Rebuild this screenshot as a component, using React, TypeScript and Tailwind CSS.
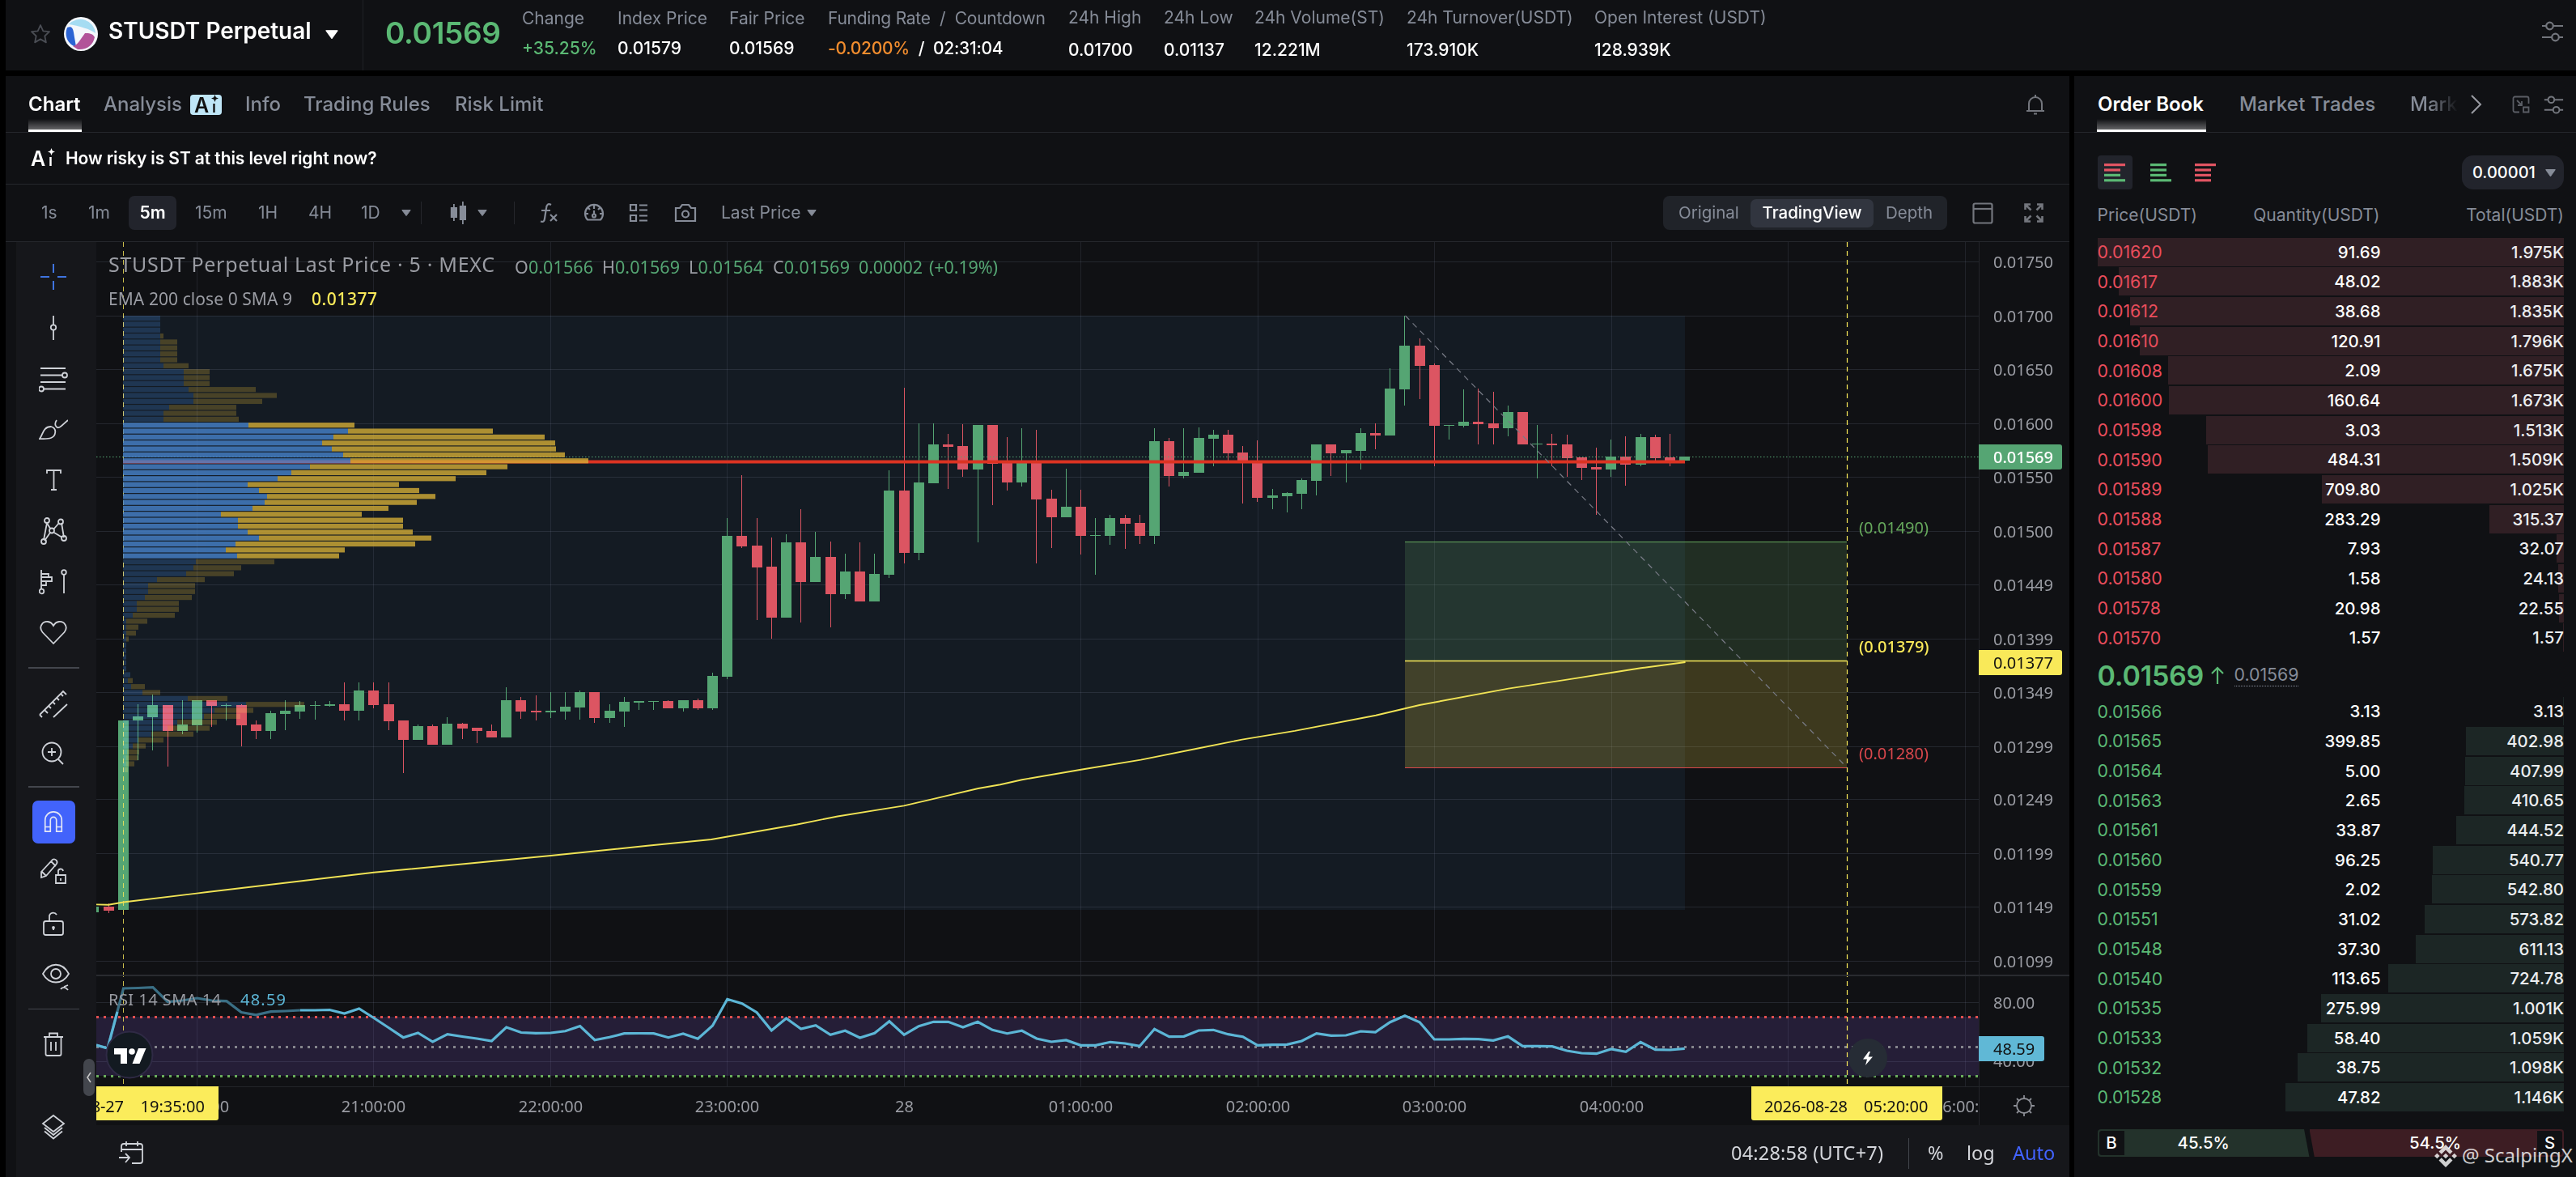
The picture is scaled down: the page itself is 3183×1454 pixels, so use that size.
import { ReactNode } from "react";

// [high, bodyTop, bodyBottom, low, up] in plot pixels, one entry per 5m candle
const candles: [number, number, number, number, number][] = [
  [890, 890, 1124, 1124, 1], [870, 885, 890, 939, 1], [858, 871, 886, 927, 1], [871, 871, 903, 947, 0], [865, 895, 903, 907, 1],
  [865, 865, 896, 905, 1], [865, 865, 872, 898, 0], [869, 871, 872, 890, 1], [870, 871, 896, 922, 0], [890, 895, 903, 913, 0],
  [878, 881, 903, 913, 1], [865, 878, 882, 902, 1], [866, 871, 879, 888, 1], [866, 871, 872, 889, 1], [866, 870, 872, 873, 1],
  [843, 870, 878, 890, 0], [843, 853, 878, 890, 1], [843, 853, 871, 875, 0], [843, 870, 891, 902, 0], [890, 890, 914, 955, 0],
  [895, 897, 914, 914, 1], [895, 897, 920, 920, 0], [886, 894, 920, 920, 1], [893, 894, 900, 913, 0], [899, 899, 903, 918, 0],
  [895, 903, 911, 911, 0], [849, 865, 911, 911, 1], [861, 865, 879, 888, 0], [859, 878, 880, 890, 0], [855, 878, 880, 887, 1],
  [855, 873, 879, 889, 1], [853, 855, 874, 889, 1], [855, 855, 887, 893, 0], [870, 878, 887, 893, 1], [861, 867, 879, 898, 1],
  [866, 866, 868, 877, 1], [866, 866, 867, 877, 1], [865, 866, 875, 875, 0], [865, 865, 875, 879, 1], [863, 865, 875, 877, 0],
  [831, 835, 875, 877, 1], [640, 662, 836, 839, 1], [587, 662, 675, 677, 0], [640, 674, 701, 766, 0], [664, 700, 763, 789, 0],
  [660, 670, 763, 763, 1], [629, 670, 719, 769, 0], [657, 688, 719, 719, 1], [669, 688, 734, 775, 0], [684, 706, 734, 740, 1],
  [670, 706, 743, 743, 0], [684, 709, 743, 743, 1], [581, 606, 710, 714, 1], [479, 606, 683, 696, 0], [523, 596, 683, 692, 1],
  [523, 549, 597, 597, 1], [536, 549, 552, 604, 0], [524, 551, 580, 589, 0], [525, 525, 580, 670, 1], [525, 525, 573, 624, 0],
  [540, 569, 596, 606, 0], [529, 569, 596, 601, 1], [531, 571, 617, 696, 0], [605, 616, 639, 677, 0], [579, 626, 639, 639, 1],
  [605, 626, 662, 685, 0], [640, 661, 662, 710, 1], [636, 640, 662, 673, 1], [636, 640, 647, 678, 0], [636, 646, 662, 672, 0],
  [529, 545, 662, 672, 1], [541, 545, 588, 601, 0], [529, 583, 588, 591, 1], [528, 541, 584, 584, 1], [531, 537, 542, 576, 1],
  [531, 537, 560, 569, 0], [551, 559, 571, 622, 0], [544, 570, 615, 620, 0], [604, 612, 615, 629, 1], [608, 609, 613, 633, 1],
  [591, 593, 610, 629, 1], [549, 549, 594, 612, 1], [549, 549, 560, 588, 0], [556, 556, 560, 596, 1], [529, 535, 557, 580, 1],
  [523, 535, 538, 555, 0], [455, 480, 538, 538, 1], [390, 427, 481, 501, 1], [418, 427, 452, 493, 0], [449, 451, 526, 576, 0],
  [525, 525, 526, 543, 1], [481, 521, 526, 528, 1], [480, 521, 524, 549, 0], [484, 523, 529, 549, 0], [501, 509, 529, 539, 1],
  [509, 509, 549, 549, 0], [525, 548, 549, 591, 1], [536, 548, 550, 576, 0], [537, 549, 566, 589, 0], [565, 565, 578, 593, 0],
  [553, 577, 580, 636, 0], [543, 564, 580, 589, 1], [539, 564, 574, 600, 0], [536, 540, 574, 576, 1], [537, 540, 566, 570, 0],
  [536, 565, 570, 576, 0], [564, 564, 569, 571, 1],
];

const rsi = [
  1221, 1220.5, 1219.6, 1237.5, 1236, 1233, 1236, 1236.7, 1250.5, 1253.8, 1249.6, 1249, 1248, 1248, 1247.5, 1252, 1246, 1257.5, 1269.5,
  1281.7, 1276, 1287, 1277.6, 1280.5, 1283, 1286, 1269, 1275.5, 1276.3, 1276, 1273.8, 1267.6, 1284.7, 1281.3, 1276.7, 1276.5, 1276.7,
  1281.7, 1277, 1283.3, 1267, 1234.3, 1239.7, 1250.7, 1273, 1258, 1271, 1266.7, 1278.3, 1273.3, 1282, 1276.3, 1261.7, 1278.3, 1267.7,
  1262.3, 1262.3, 1269, 1262.3, 1272.3, 1276.7, 1273.3, 1283, 1287, 1285, 1291.3, 1291.3, 1287.3, 1289, 1292.3, 1271.3, 1280.7, 1280.3,
  1273, 1272.3, 1277.7, 1280.7, 1291.3, 1290.7, 1290.3, 1286, 1276.7, 1279.3, 1279, 1274, 1275, 1262.7, 1254.7, 1262.7, 1284, 1284,
  1283.3, 1283.7, 1285.3, 1280.3, 1292.3, 1292.3, 1292.7, 1298, 1301, 1301.7, 1296, 1299.3, 1287.3, 1296.7, 1297, 1295.3,
];

// [up volume, total volume] widths per profile row
const profile: [number, number][] = [
  [46, 46], [46, 46], [46, 46], [46, 50], [46, 67], [46, 67], [46, 67], [46, 67], [50, 81], [75, 107], [75, 107], [75, 107], [81, 164],
  [87, 190], [87, 172], [57, 140], [50, 140], [50, 143], [155, 286], [278, 457], [260, 521], [246, 534], [258, 535], [272, 546],
  [281, 575], [231, 475], [208, 449], [191, 411], [154, 341], [168, 366], [178, 386], [175, 363], [160, 328], [121, 295], [142, 346],
  [142, 346], [154, 358], [168, 381], [139, 361], [127, 274], [141, 267], [90, 187], [87, 146], [78, 137], [42, 101], [31, 89],
  [31, 89], [27, 85], [17, 69], [17, 69], [12, 64], [4, 30], [4, 19], [4, 16], [4, 7], [4, 4], [4, 4], [4, 4], [4, 4], [4, 4], [9, 9],
  [6, 12], [10, 27], [24, 46], [80, 129], [152, 224], [113, 161], [100, 145], [67, 116], [55, 107], [35, 87], [19, 50], [12, 28],
  [5, 20], [4, 19], [4, 14], [2, 6],
];

const ema =
  "119,1117.4 134,1117.8 152.5,1114.5 243,1103.6 462,1077.8 680.6,1057 800,1044.8 879,1037 985,1018.5 1035,1008.5 1090,999.6 1117,995.4 1153.6,986.8 1208.7,974 1236,969.3 1262.7,963.2 1335.7,950.7 1409.7,938.6 1481.6,924.3 1534.7,913.6 1600,902.9 1700,883.7 1754,871 1863.8,850.6 1936,839.6 1991,831 2027.5,825.3 2082.5,818";

const priceTicks: [string, number][] = [
  ["0.01750", 323.5], ["0.01700", 390.5], ["0.01650", 456.5], ["0.01600", 523.5], ["0.01550", 589.5], ["0.01500", 656.5],
  ["0.01449", 722.5], ["0.01399", 789.5], ["0.01349", 855.5], ["0.01299", 922.5], ["0.01249", 987.5], ["0.01199", 1054.5],
  ["0.01149", 1120.5], ["0.01099", 1187.5],
];

const timeTicks: [string, number][] = [
  ["20:00:00", 243.5], ["21:00:00", 461.5], ["22:00:00", 680.5], ["23:00:00", 898.5], ["28", 1117.5], ["01:00:00", 1335.5],
  ["02:00:00", 1554.5], ["03:00:00", 1772.5], ["04:00:00", 1991.5], ["", 2209.5], ["06:00:00", 2428.5],
];

const asks: [string, string, string, number][] = [
  ["0.01620", "91.69", "1.975K", 1975], ["0.01617", "48.02", "1.883K", 1883], ["0.01612", "38.68", "1.835K", 1835],
  ["0.01610", "120.91", "1.796K", 1796], ["0.01608", "2.09", "1.675K", 1675], ["0.01600", "160.64", "1.673K", 1673],
  ["0.01598", "3.03", "1.513K", 1513], ["0.01590", "484.31", "1.509K", 1509], ["0.01589", "709.80", "1.025K", 1025],
  ["0.01588", "283.29", "315.37", 315], ["0.01587", "7.93", "32.07", 32], ["0.01580", "1.58", "24.13", 24],
  ["0.01578", "20.98", "22.55", 22], ["0.01570", "1.57", "1.57", 2],
];

const bids: [string, string, string, number][] = [
  ["0.01566", "3.13", "3.13", 3], ["0.01565", "399.85", "402.98", 403], ["0.01564", "5.00", "407.99", 408],
  ["0.01563", "2.65", "410.65", 411], ["0.01561", "33.87", "444.52", 444], ["0.01560", "96.25", "540.77", 541],
  ["0.01559", "2.02", "542.80", 543], ["0.01551", "31.02", "573.82", 574], ["0.01548", "37.30", "611.13", 611],
  ["0.01540", "113.65", "724.78", 725], ["0.01535", "275.99", "1.001K", 1001], ["0.01533", "58.40", "1.059K", 1059],
  ["0.01532", "38.75", "1.098K", 1098], ["0.01528", "47.82", "1.146K", 1146],
];

const cx = (i: number) => 152.5 + i * 18.2;

export default function App() {
  return (
    <div className="flex h-[1454px] w-[3183px] flex-col overflow-hidden bg-black pl-[7px] font-['Inter',sans-serif] text-[20px] text-white">
      <Header />
      <div className="mt-[7px] flex h-[1360px]">
        <div className="flex w-[2550px] flex-col bg-[#101114]">
          <ChartTabs />
          <Question />
          <Toolbar />
          <div className="flex flex-1">
            <DrawingTools />
            <div className="flex w-[2438px] flex-col">
              <div className="relative h-[1091px]">
                <Chart />
              </div>
              <BottomBar />
            </div>
          </div>
        </div>
        <OrderBook />
      </div>
    </div>
  );
}

function Header() {
  return (
    <header className="flex h-[87px] shrink-0 bg-[#101114] pr-[15px]">
      <div className="flex w-[442px] items-center border-r border-[#1f2126] pl-[29px]">
        <svg width="28" height="28" viewBox="0 0 28 28" fill="none" stroke="#4a4d54" strokeWidth="1.8" strokeLinejoin="round" className="mt-[-3px]">
          <path d="M14 3l3.3 7.3 7.7.9-5.7 5.3 1.6 7.9L14 20.4l-6.900 4 1.600-7.900L3 11.200l7.700-.9z" />
        </svg>
        <svg width="42" height="42" viewBox="0 0 42 42" className="ml-[15px] mt-[-3px]">
          <circle cx="21" cy="21" r="21" fill="#f4f7fb" />
          <path d="M6 9A19 19 0 0 1 39 20C33 15 18 11 6 9z" fill="#a5dcf2" />
          <path d="M4 13c5-2 7 0 8 6 1 7 2 11 3 18C5 34 0 23 4 13z" fill="#2b63d3" />
          <path d="M26 20c5 0 9 0 12 5-2 10-10 16-21 15l-6-4c5-1 8-6 15-16z" fill="#b25399" />
        </svg>
        <span className="ml-[13px] mt-[-12px] w-[268px] text-[28px] font-semibold whitespace-nowrap">STUSDT Perpetual</span>
        <Caret className="mt-[-3px] h-[11px] w-[16px] text-white" />
      </div>
      <span className="ml-[27px] mt-[14px] w-[169px] text-[37px] leading-[54px] font-semibold tracking-[-0.3px] text-[#5bb974]">0.01569</span>
      <Stat className="w-[118px]" label="Change"><span className="text-[#5bb974]">+35.25%</span></Stat>
      <Stat className="w-[138px]" label="Index Price">0.01579</Stat>
      <Stat className="w-[122px]" label="Fair Price">0.01569</Stat>
      <Stat className="w-[297px]" label="Funding Rate&nbsp; / &nbsp;Countdown" tight>
        <span className="text-[#f08c2e]">-0.0200%</span>&nbsp; /&nbsp; 02:31:04
      </Stat>
      <Stat className="w-[118px] -mt-px" label="24h High" low>0.01700</Stat>
      <Stat className="w-[112px] -mt-px" label="24h Low" low>0.01137</Stat>
      <Stat className="w-[188px] -mt-px" label="24h Volume(ST)" low>12.221M</Stat>
      <Stat className="w-[232px] -mt-px" label="24h Turnover(USDT)" low>173.910K</Stat>
      <Stat className="-mt-px" label="Open Interest (USDT)" low>128.939K</Stat>
      <Sliders className="mt-[25px] ml-auto h-[28px] w-[28px]" />
    </header>
  );
}

type StatProps = { label: string; children: ReactNode; className?: string; low?: boolean; tight?: boolean };

function Stat({ label, children, className = "", low, tight }: StatProps) {
  return (
    <div className={`shrink-0 pt-[9px] whitespace-nowrap ${tight ? "tracking-[-0.25px]" : ""} ${className}`}>
      <p className="text-[21px] leading-[28px] text-[#868c98]">{label}</p>
      <p className={low ? "mt-[12px] text-[21px] leading-[28px] font-medium" : "mt-[9px] text-[21px] leading-[28px] font-medium"}>{children}</p>
    </div>
  );
}

function Caret({ className = "" }: { className?: string }) {
  return (
    <svg viewBox="0 0 12 8" preserveAspectRatio="none" className={`shrink-0 ${className}`}>
      <path d="M.8.6h10.400L6 7.600z" fill="currentColor" stroke="currentColor" strokeLinejoin="round" />
    </svg>
  );
}

function Sliders({ className = "" }: { className?: string }) {
  return (
    <svg viewBox="0 0 28 28" fill="none" stroke="#73767d" strokeWidth="2.2" className={`shrink-0 ${className}`}>
      <path d="M1 7h5M15 7h12M1 21h12M22 21h5" />
      <circle cx="10.500" cy="7" r="4.300" />
      <circle cx="17.500" cy="21" r="4.300" />
    </svg>
  );
}

function AiMark({ color }: { color: string }) {
  return (
    <svg width="32" height="22" viewBox="0 0 32 22" fill={color} className="overflow-visible font-['Inter',sans-serif] font-semibold">
      <text x="0" y="20" fontSize="25">A</text>
      <text x="22" y="20" fontSize="19">ı</text>
      <path d="M25.500-2l1.300 3.200L30 2.500l-3.200 1.300L25.500 7l-1.300-3.200L21 2.500l3.200-1.300z" />
    </svg>
  );
}

function ChartTabs() {
  return (
    <nav className="flex h-[70px] shrink-0 items-center gap-[29px] border-b border-[#25272c] pt-px pl-[28px] text-[24px] font-medium text-[#868c98]">
      <span className="flex h-full w-[66px] items-center border-b-[3px] border-white bg-linear-to-t from-white/35 via-transparent via-20% pt-[3px] font-semibold text-white">Chart</span>
      <span className="-ml-[2px] flex w-[146px] items-center justify-between">
        Analysis
        <span className="flex h-[25px] w-[39px] items-center justify-center rounded-[4px] bg-[#bfe6f7] pt-[2px] pl-[2px]"><AiMark color="#111" /></span>
      </span>
      <span className="w-[45px]">Info</span>
      <span className="-ml-[2px] w-[158px] whitespace-nowrap">Trading Rules</span>
      <span className="whitespace-nowrap">Risk Limit</span>
      <svg viewBox="0 0 24 26" className="mr-[30px] ml-auto h-[26px] w-[24px]" fill="none" stroke="#73767d" strokeWidth="2">
        <path d="M1 21h22M4 21v-9a8 8 0 0 1 16 0v9M12 4V1M10 24.500h4" />
      </svg>
    </nav>
  );
}

function Question() {
  return (
    <div className="flex h-[64px] shrink-0 items-center gap-[11px] border-b border-[#25272c] pl-[31px] text-[21px] font-semibold tracking-[-0.1px]">
      <AiMark color="#fff" />
      How risky is ST at this level right now?
    </div>
  );
}

function Toolbar() {
  return (
    <div className="flex h-[71px] shrink-0 items-center border-b border-[#25272c] pl-[44px] text-[21px] text-[#868c98]">
      <span className="w-[58px]">1s</span>
      <span className="w-[50px]">1m</span>
      <span className="flex h-[42px] w-[59px] items-center justify-center rounded-[7px] bg-[#22242c] font-semibold text-white">5m</span>
      <span className="ml-[23px] w-[78px]">15m</span>
      <span className="w-[62px]">1H</span>
      <span className="w-[65px]">4H</span>
      <span className="w-[50px]">1D</span>
      <Caret className="mr-[12px] h-[8px] w-[12px]" />
      <span className="h-[28px] w-px bg-[#25272c]" />
      <svg viewBox="0 0 22 28" className="ml-[35px] h-[28px] w-[22px]" fill="currentColor">
        <path d="M4 3h1.800v4H9v13H5.800v4H4v-4H.8V7H4zM15 0h1.800v5H20v18h-3.200v5H15v-5h-3.200V5H15z" />
      </svg>
      <Caret className="mr-[33px] ml-[12px] h-[8px] w-[12px]" />
      <span className="h-[28px] w-px bg-[#25272c]" />
      <svg viewBox="0 0 24 26" className="ml-[31px] h-[26px] w-[24px]" fill="none" stroke="currentColor" strokeWidth="2.200">
        <path d="M14 3c-4-2-5.500 0-6 4L6 20c-.5 4-2 4.500-5 3.500M2 10h11M13 15l8 8M21 15l-8 8" />
      </svg>
      <svg viewBox="0 0 26 24" className="ml-[30px] h-[24px] w-[26px]" fill="none" stroke="currentColor" strokeWidth="2.200">
        <path d="M5 20.500a11 11 0 1 1 16 0zM13 3v4M3 13h3M20 13h3M6 6l2 2M20 6l-2 2M13 9v5" />
        <circle cx="13" cy="15.500" r="2" />
      </svg>
      <svg viewBox="0 0 24 24" className="ml-[30px] h-[24px] w-[24px]" fill="none" stroke="currentColor" strokeWidth="2.200">
        <path d="M2 2h7v7H2zM2 15h7v7H2zM13 2.500h10M13 8.500h10M13 15.500h10M13 21.500h10" />
      </svg>
      <svg viewBox="0 0 28 24" className="ml-[32px] h-[24px] w-[28px]" fill="none" stroke="currentColor" strokeWidth="2.200">
        <path d="M2 6h5l3-4h8l3 4h5v16H2z" />
        <circle cx="14" cy="13.500" r="4" />
      </svg>
      <span className="ml-[30px] w-[106px] text-[21px] whitespace-nowrap">Last Price</span>
      <Caret className="h-[8px] w-[12px]" />
      <div className="ml-auto flex h-[42px] w-[351px] items-center rounded-[8px] bg-[#202329] text-[20.500px]">
        <span className="w-[108px] pl-[19px]">Original</span>
        <span className="flex h-[35px] w-[152px] items-center justify-center rounded-[7px] bg-[#31353f] font-medium text-white">TradingView</span>
        <span className="pl-[15px]">Depth</span>
      </div>
      <svg viewBox="0 0 26 27" className="ml-[31px] h-[27px] w-[26px]" fill="none" stroke="#73767d" strokeWidth="2.200">
        <rect x="1.500" y="1.500" width="23" height="24" rx="2" />
        <path d="M2 8h22" />
      </svg>
      <svg viewBox="0 0 24 24" className="mr-[32px] ml-[38px] h-[24px] w-[24px]" fill="none" stroke="#73767d" strokeWidth="2.600">
        <path d="M1.500 8V1.500H8M1.500 1.500l7 7M16 1.500h6.500V8M22.500 1.500l-7 7M1.500 16v6.500H8M1.500 22.500l7-7M16 22.500h6.500V16M22.500 22.500l-7-7" />
      </svg>
    </div>
  );
}

function Tool({ className = "h-[62.7px]", children }: { className?: string; children: ReactNode }) {
  return (
    <div className={`flex w-full shrink-0 items-center justify-center ${className}`}>
      <svg width="36" height="36" viewBox="0 0 36 36" fill="none" stroke="#cfd2d8" strokeWidth="1.800">
        {children}
      </svg>
    </div>
  );
}

function DrawingTools() {
  return (
    <aside className="ml-[13px] flex w-[99px] shrink-0 flex-col items-center bg-[#16171b] pt-[12px] pr-[7px]">
      <Tool><path d="M2 18h11M23 18h11M18 2v11M18 23v11" stroke="#3f74e0" strokeWidth="2" /></Tool>
      <Tool><path d="M18 3v11M18 21v12" /><circle cx="18" cy="17.500" r="3.200" /></Tool>
      <Tool>
        <path d="M2 5h31M2 13.500h27M2 22h31M6 30.500h27" />
        <circle cx="32" cy="13.500" r="3" /><circle cx="3" cy="30.500" r="3" />
      </Tool>
      <Tool>
        <path d="M1 30c4-5 4-15 14-15 8 2 6 12 0 14-4 1.500-9 1-14 1zM22 7c-4 6 0 10 3 9 3-1 7-6 11-9" />
      </Tool>
      <Tool><path d="M10 10V6h17v4M18.500 6v24M15 30h7" /></Tool>
      <Tool>
        <path d="M10 8L6 29M9.500 7.500l5 8M18 16l7-8M14 20l-7 10M19 20l10 6M28 8l3 18" />
        <circle cx="10" cy="5" r="3" /><circle cx="27" cy="6.500" r="3" /><circle cx="16" cy="17.500" r="3" />
        <circle cx="6" cy="31" r="3" /><circle cx="31" cy="27" r="3" />
      </Tool>
      <Tool>
        <path d="M3 4v24M3 9h9v4H3M3 13h13v5H3M3 18h6v5H3M31 10v23" />
        <circle cx="3.500" cy="30.500" r="2.800" /><circle cx="31" cy="7" r="2.800" />
      </Tool>
      <Tool><path d="M18 32L4.500 18C-1 11 5 4.500 11 5c3.500.3 5.500 2.300 7 5 1.500-2.700 3.500-4.700 7-5 6-.5 12 6 6.500 13z" /></Tool>
      <span className="mt-[11px] h-[2px] w-[63px] shrink-0 bg-[#43464d]" />
      <Tool className="mt-[14px] h-[60px]">
        <path d="M1 31L30 2l4 4M1 31l3 3M7 25l4 4M12 20l3 3M17 15l3 3M22 10l3 3M27 5l3 3M18 34l17-16" />
      </Tool>
      <Tool className="h-[60px]"><circle cx="16" cy="17" r="11.500" /><path d="M24 26l6 6M16 12v10M11 17h10" /></Tool>
      <span className="mt-[11px] h-[2px] w-[63px] shrink-0 bg-[#43464d]" />
      <div className="mt-[16px] flex h-[53px] w-[53px] shrink-0 items-center justify-center rounded-[7px] bg-[#4263fb]">
        <svg width="28" height="28" viewBox="0 0 30 30" fill="none" stroke="#e4e7f5" strokeWidth="1.800">
          <path d="M4 28V13a11 11 0 0 1 22 0v15h-7V13a4 4 0 0 0-8 0v15zM4 22h7M19 22h7" />
        </svg>
      </div>
      <Tool className="mt-[2px] h-[65px]">
        <path d="M3 19L17 4c3-2 7 2 5 5L9 24l-6 2zM15 6l6 6M4 19l5 5M21 23h12v10H21zM24 23v-4a3 3 0 0 1 6-1M27 27v3" />
      </Tool>
      <Tool className="h-[65px]">
        <rect x="6" y="15" width="24" height="17" rx="2.500" />
        <path d="M13 15V8a5 5 0 0 1 9-1M18 22v4" /><circle cx="18" cy="23" r="1" />
      </Tool>
      <Tool className="h-[65px] pl-[6px]">
        <path d="M2 15c8-15 24-15 32 0-8 14-24 14-32 0z" /><circle cx="18" cy="15" r="6" />
        <path d="M24 34c2-3 6-3 9 1M28 31l5-2" />
      </Tool>
      <span className="mt-[7px] h-px w-[63px] shrink-0 bg-[#43464d]" />
      <Tool className="mt-[12px] h-[62px]">
        <path d="M6 9h24M8.500 9v21a2 2 0 0 0 2 2h15a2 2 0 0 0 2-2V9M13 9V4.500h10V9M15 15v11M21 15v11" />
      </Tool>
      <div className="relative w-full">
        <div className="absolute top-[-13px] right-[-5px] flex h-[46px] w-[14px] items-center justify-center rounded-full bg-[#43464d]">
          <svg width="8" height="14" viewBox="0 0 8 14" fill="none" stroke="#ccc" strokeWidth="1.500"><path d="M6 1L2 7l4 6" /></svg>
        </div>
      </div>
      <Tool className="mt-[40px] h-[62px]">
        <path d="M18 4l13 10-13 10L5 14zM7 19l11 9 11-9M7 23.500l11 9 11-9" />
      </Tool>
    </aside>
  );
}

function Chart() {
  return (
    <svg width="2438" height="1091" viewBox="119 299 2438 1091" className="block font-['Noto_Sans',sans-serif] text-[20px]" fill="none">
      <rect x="152" y="390" width="1930" height="734" fill="#141b23" />
      {priceTicks.map(([t, y]) => <path key={t} d={`M119 ${y}H2445`} stroke="#9aa6c4" strokeOpacity=".15" />)}
      <path d="M119 1238.500H2445M119 1311.500H2445" stroke="#9aa6c4" strokeOpacity=".15" />
      {timeTicks.map(([, x]) => <path key={x} d={`M${x} 299V1342`} stroke="#9aa6c4" strokeOpacity=".13" />)}
      <rect x="119" y="1256" width="2326" height="73" fill="#7e57c2" fillOpacity=".2" />

      <rect x="1736" y="669" width="546" height="147" fill="#78be6e" fillOpacity=".17" />
      <rect x="1736" y="816" width="546" height="133" fill="#f5dc46" fillOpacity=".2" />
      <path d="M1736 669.500H2282" stroke="#66a85c" strokeWidth="1.200" />
      <path d="M1736 948.500H2282" stroke="#d9474c" strokeWidth="1.200" />

      {/* bars that are scrolled half out of the pane */}
      <path d="M119 1120h3v7h-3z" fill="#55a573" />
      <path d="M134.500 1116V1128" stroke="#dc5562" />
      <rect x="128" y="1120" width="13" height="5" fill="#dc5562" />
      {candles.map(([h, t, b, l, up], i) => {
        const color = up ? "#55a573" : "#dc5562";
        return (
          <g key={i}>
            <path d={`M${Math.floor(cx(i)) + 0.5} ${h}V${l}`} stroke={color} />
            <rect x={Math.round(cx(i) - 6.5)} y={t} width="13" height={Math.max(b - t, 1)} fill={color} />
          </g>
        );
      })}

      <path d="M119 564.500H2445" stroke="#55a573" strokeDasharray="1.500 2.500" />
      <path d="M152 570.500H2082" stroke="#dc3322" strokeWidth="4" />
      <path d="M152.500 299V1342" stroke="#f9e959" strokeOpacity=".8" strokeDasharray="6 5" />
      {profile.map(([up, total], i) => {
        const value = i > 17 && i < 41;
        const y = 390 + i * 7.34;
        return value ? (
          <g key={i} opacity=".8">
            <rect x="152" y={y} width={up} height="6.200" fill="#4783cc" />
            <rect x={152 + up} y={y} width={total - up} height="6.200" fill="#d3ac36" />
          </g>
        ) : (
          <g key={i} className="mix-blend-screen">
            <rect x="152" y={y} width={up} height="6.200" fill="#0c1e36" />
            <rect x={152 + up} y={y} width={total - up} height="6.200" fill="#382c05" />
          </g>
        );
      })}
      <path d="M1736 816.500H2282" stroke="#f9e959" strokeWidth="1.500" />
      <polyline points={ema} stroke="#f0e355" strokeWidth="1.900" />
      <path d="M1736.500 390L2282 948" stroke="#787b86" strokeDasharray="7 6" strokeWidth="1.200" />

      <path d="M119 1256.500H2445" stroke="#e0504f" strokeWidth="3" strokeDasharray="3 6" />
      <path d="M119 1293.500H2445" stroke="#85858c" strokeWidth="3" strokeDasharray="3 6" />
      <path d="M119 1329.500H2445" stroke="#6aae5c" strokeWidth="3" strokeDasharray="3 6" />
      <polyline points={`119,1291 133,1295 ${rsi.slice(0, 13).map((y, i) => `${cx(i)},${y}`).join(" ")}`} stroke="#3a6f85" strokeWidth="3.200" />
      <polyline points="119,1291 133,1295 145,1250" stroke="#5cb6d6" strokeWidth="3.200" />
      <polyline points={rsi.slice(12).map((y, i) => `${cx(i + 12)},${y}`).join(" ")} stroke="#5cb6d6" strokeWidth="3.200" />

      <path d="M2282.500 299V1342" stroke="#f9e959" strokeWidth="1.200" strokeDasharray="6 5" />
      <path d="M119 1205H2557" stroke="#292b30" strokeWidth="2" />
      <path d="M119 1342.500H2557M2445.500 299V1390" stroke="#222429" />

      <g fill="#9a9ca3">
        <text x="134" y="336" fontSize="25" textLength="477">STUSDT Perpetual Last Price · 5 · MEXC</text>
        <g fill="#55a573" fontSize="21.500">
          <text x="636" y="338" textLength="97"><tspan fill="#9a9ca3">O</tspan>0.01566</text>
          <text x="744" y="338" textLength="96"><tspan fill="#9a9ca3">H</tspan>0.01569</text>
          <text x="851" y="338" textLength="92"><tspan fill="#9a9ca3">L</tspan>0.01564</text>
          <text x="955" y="338" textLength="95"><tspan fill="#9a9ca3">C</tspan>0.01569</text>
          <text x="1061" y="338" textLength="79">0.00002</text>
          <text x="1148" y="338" textLength="85">(+0.19%)</text>
        </g>
        <text x="134" y="377" fontSize="21" textLength="227">EMA 200 close 0 SMA 9</text>
        <text x="385" y="377" fontSize="21" fill="#f9e959" fontWeight="500" textLength="81">0.01377</text>
        <text x="134" y="1242" textLength="139">RSI 14 SMA 14</text>
        <text x="297" y="1242" fill="#5cb6d6" textLength="56">48.59</text>
        {priceTicks.map(([t, y]) => <text key={t} x="2463" y={y + 7}>{t}</text>)}
        <text x="2463" y="1246">80.00</text>
        <text x="2463" y="1318">40.00</text>
      </g>
      <svg x="119" y="1343" width="2326" height="47" viewBox="119 1343 2326 47">
        {timeTicks.map(([t, x]) => <text key={x} x={x} y="1373.500" textAnchor="middle" fill="#9a9ca3">{t}</text>)}
      </svg>
      <text x="2297" y="659" fill="#66a85c">(0.01490)</text>
      <text x="2297" y="806" fill="#f9e959" fontWeight="500">(0.01379)</text>
      <text x="2297" y="938" fill="#d9474c">(0.01280)</text>

      <path d="M2445 549h100a3 3 0 0 1 3 3v25a3 3 0 0 1-3 3h-100z" fill="#55a573" />
      <text x="2463" y="572" fill="#fff" fontWeight="500" textLength="74">0.01569</text>
      <path d="M2445 803h100a3 3 0 0 1 3 3v25a3 3 0 0 1-3 3h-100z" fill="#f9e959" />
      <text x="2463" y="826" fill="#111">0.01377</text>
      <path d="M2445 1280h78a3 3 0 0 1 3 3v25a3 3 0 0 1-3 3h-78z" fill="#60b8d6" />
      <text x="2463" y="1303" fill="#111">48.59</text>

      <path d="M119 1342h151v39a3 3 0 0 1-3 3H119z" fill="#fbec5b" />
      <text x="50" y="1373.500" fill="#111" textLength="103">2026-08-27</text>
      <text x="173.500" y="1373.500" fill="#111">19:35:00</text>
      <path d="M2164 1342h236v39a3 3 0 0 1-3 3h-230a3 3 0 0 1-3-3z" fill="#fbec5b" />
      <text x="2180" y="1373.500" fill="#111" textLength="103">2026-08-28</text>
      <text x="2303" y="1373.500" fill="#111">05:20:00</text>

      <circle cx="160" cy="1303" r="28.500" fill="#131a21" stroke="#2f2a45" strokeWidth="2" />
      <path d="M141 1295h16v19h-8v-11.500h-8zM171 1295h9.500l-8 19h-9z" fill="#fff" />
      <circle cx="163" cy="1299" r="3.800" fill="#fff" />
      <circle cx="2308" cy="1307" r="24" fill="#262c35" />
      <path d="M2309 1299l-7 9.500h5l-2 7.500 9-10.500h-5.500l2.500-6.500z" fill="#fff" />
      <g stroke="#8b8d94" strokeWidth="1.800">
        <circle cx="2501" cy="1366" r="9" />
        <path d="M2501 1353v4M2501 1375v4M2488 1366h4M2510 1366h4M2492 1357l2.500 2.500M2507.500 1372.500l2.500 2.500M2492 1375l2.500-2.500M2507.500 1359.500l2.500-2.500" />
      </g>
    </svg>
  );
}

function BottomBar() {
  return (
    <div className="flex h-[64px] items-center bg-[#16171b] pt-[5px] pr-[20px] pl-[27px] font-['Noto_Sans',sans-serif] text-[23.500px] text-[#d5d7dc]">
      <svg width="32" height="30" viewBox="0 0 32 30" fill="none" stroke="#cfd2d8" strokeWidth="1.800">
        <path d="M4 13V6a3 3 0 0 1 3-3h20a3 3 0 0 1 3 3v18a3 3 0 0 1-3 3H17M4 10h26M10 0v6M24 0v6M1 20h12M9 15l5 5-5 6" />
      </svg>
      <span className="ml-auto w-[219px] tracking-[0.2px] whitespace-nowrap">04:28:58 (UTC+7)</span>
      <span className="mr-[23px] h-[38px] w-px bg-[#43464d]" />
      <span className="w-[48px]">%</span>
      <span className="w-[57px]">log</span>
      <span className="w-[50px] text-[#4263ff]">Auto</span>
    </div>
  );
}

function BookIcon({ colors, long }: { colors: string[]; long: number[] }) {
  return (
    <svg width="26" height="23" viewBox="0 0 26 23">
      {colors.map((c, i) => <rect key={i} x="0" y={i * 6.4} width={long.includes(i) ? 26 : 20} height="3.200" fill={c} />)}
    </svg>
  );
}

function Row({ row, side }: { row: [string, string, string, number]; side: "ask" | "bid" }) {
  const [price, qty, total, depth] = row;
  const ask = side === "ask";
  return (
    <div className="relative flex h-[36.700px] items-center font-medium">
      <div
        className={`absolute top-0 right-0 h-[35px] ${ask ? "bg-[#301f24]" : "bg-[#1c2625]"}`}
        style={{ width: `${(depth / (ask ? 1975 : 1923)) * 100}%` }}
      />
      <span className={`relative w-[150px] text-[21.300px] font-normal ${ask ? "text-[#ea4d5c]" : "text-[#5bb974]"}`}>{price}</span>
      <span className="relative w-[200px] text-right text-[20.400px]">{qty}</span>
      <span className="relative flex-1 text-right text-[20.400px] text-[#eceef0]">{total}</span>
    </div>
  );
}

function OrderBook() {
  const r = "#e25563";
  const g = "#5bb974";
  return (
    <section className="relative ml-[6px] flex flex-1 flex-col bg-[#101114]">
      <nav className="flex h-[70px] shrink-0 items-center border-b border-[#25272c] pt-px pl-[28px] text-[24px] font-medium whitespace-nowrap text-[#868c98]">
        <span className="flex h-full w-[135px] items-center border-b-[3px] border-white bg-linear-to-t from-white/35 via-transparent via-20% pt-[3px] pl-px font-semibold text-white">Order Book</span>
        <span className="ml-[41px] w-[211px] tracking-[0.2px]">Market Trades</span>
        <span className="w-[74px] bg-linear-to-r from-[#868c98] from-30% to-transparent to-80% bg-clip-text text-transparent">Mark</span>
        <svg width="15" height="24" viewBox="0 0 15 24" fill="none" stroke="#9a9ca3" strokeWidth="2"><path d="M2 1l11 11L2 23" /></svg>
        <svg width="22" height="22" viewBox="0 0 22 22" fill="none" stroke="#5b5e65" strokeWidth="1.800" className="ml-[37px]">
          <path d="M9 20.500H3.500a2 2 0 0 1-2-2v-15a2 2 0 0 1 2-2h15a2 2 0 0 1 2 2V10M6 6l6 6M12 7v5H7M14 14.500h6.500v6H14z" />
        </svg>
        <Sliders className="ml-[17px] h-[25px] w-[25px]" />
      </nav>
      <div className="flex flex-col pr-[15px] pl-[28.500px]">
        <div className="mt-[28px] flex h-[42px] items-center">
          <span className="flex h-full w-[43px] items-center justify-center rounded-[4px] bg-[#22242c]"><BookIcon colors={[r, r, g, g]} long={[0, 3]} /></span>
          <span className="ml-[22px]"><BookIcon colors={[g, g, g, g]} long={[3]} /></span>
          <span className="ml-[29px]"><BookIcon colors={[r, r, r, r]} long={[0]} /></span>
          <span className="ml-auto flex h-full w-[126px] items-center justify-between rounded-[14px] bg-[#22242c] pr-[10px] pl-[13px] text-[20px] font-medium">
            0.00001
            <Caret className="h-[9px] w-[13px] text-[#868c98]" />
          </span>
        </div>
        <div className="mt-[17px] flex h-[30px] items-center text-[21px] text-[#868c98]">
          <span className="w-[150px]">Price(USDT)</span>
          <span className="w-[199px] text-right">Quantity(USDT)</span>
          <span className="flex-1 text-right">Total(USDT)</span>
        </div>
        <div className="mt-[12.500px]">{asks.map((row) => <Row key={row[0]} row={row} side="ask" />)}</div>
        <div className="flex h-[54px] items-center text-[#5bb974]">
          <span className="w-[140px] text-[34px] font-semibold tracking-[-0.2px]">0.01569</span>
          <svg width="16" height="22" viewBox="0 0 16 22" fill="none" stroke="currentColor" strokeWidth="2.200"><path d="M8 22V2M1 9l7-7 7 7" /></svg>
          <span className="ml-[13px] border-b border-dotted border-[#868c98] text-[21.300px] leading-[27px] text-[#868c98]">0.01569</span>
        </div>
        <div>{bids.map((row) => <Row key={row[0]} row={row} side="bid" />)}</div>
        <div className="mt-[20px] flex h-[34.500px] text-[20.400px] font-medium">
          <div className="flex w-[262px] items-center rounded-l-[4px] bg-[#23322b] [clip-path:polygon(0_0,97.500%_0,100%_100%,0_100%)]">
            <span className="ml-[2px] flex h-[30px] w-[31px] items-center justify-center rounded-l-[3px] bg-[#101114]">B</span>
            <span className="ml-[66px]">45.5%</span>
          </div>
          <div className="flex flex-1 items-center justify-end rounded-r-[4px] bg-[#3d1d23] [clip-path:polygon(0_0,100%_0,100%_100%,2%_100%)]">
            <span className="mr-[94px]">54.5%</span>
            <span className="mr-[2px] flex h-[30px] w-[31px] items-center justify-center rounded-r-[3px] bg-[#101114]">S</span>
          </div>
        </div>
      </div>
      <div className="absolute top-[1317px] left-[445px] flex items-center gap-[6px] font-['Noto_Sans',sans-serif] text-[24px] whitespace-nowrap text-white/80">
        <svg width="28" height="28" viewBox="0 0 28 28" fill="currentColor">
          <path d="M14 0l8.500 8.500-3.300 3.300L14 6.600l-5.200 5.200-3.300-3.300zM14 28l8.500-8.500-3.300-3.300-5.200 5.200-5.200-5.200-3.300 3.300zM3.300 10.700L6.600 14l-3.300 3.300L0 14zM24.700 10.700L28 14l-3.300 3.300-3.300-3.300zM14 10.700l3.300 3.300-3.300 3.300-3.300-3.300z" />
        </svg>
        <span className="-mt-[2px]">@ ScalpingX</span>
      </div>
    </section>
  );
}
